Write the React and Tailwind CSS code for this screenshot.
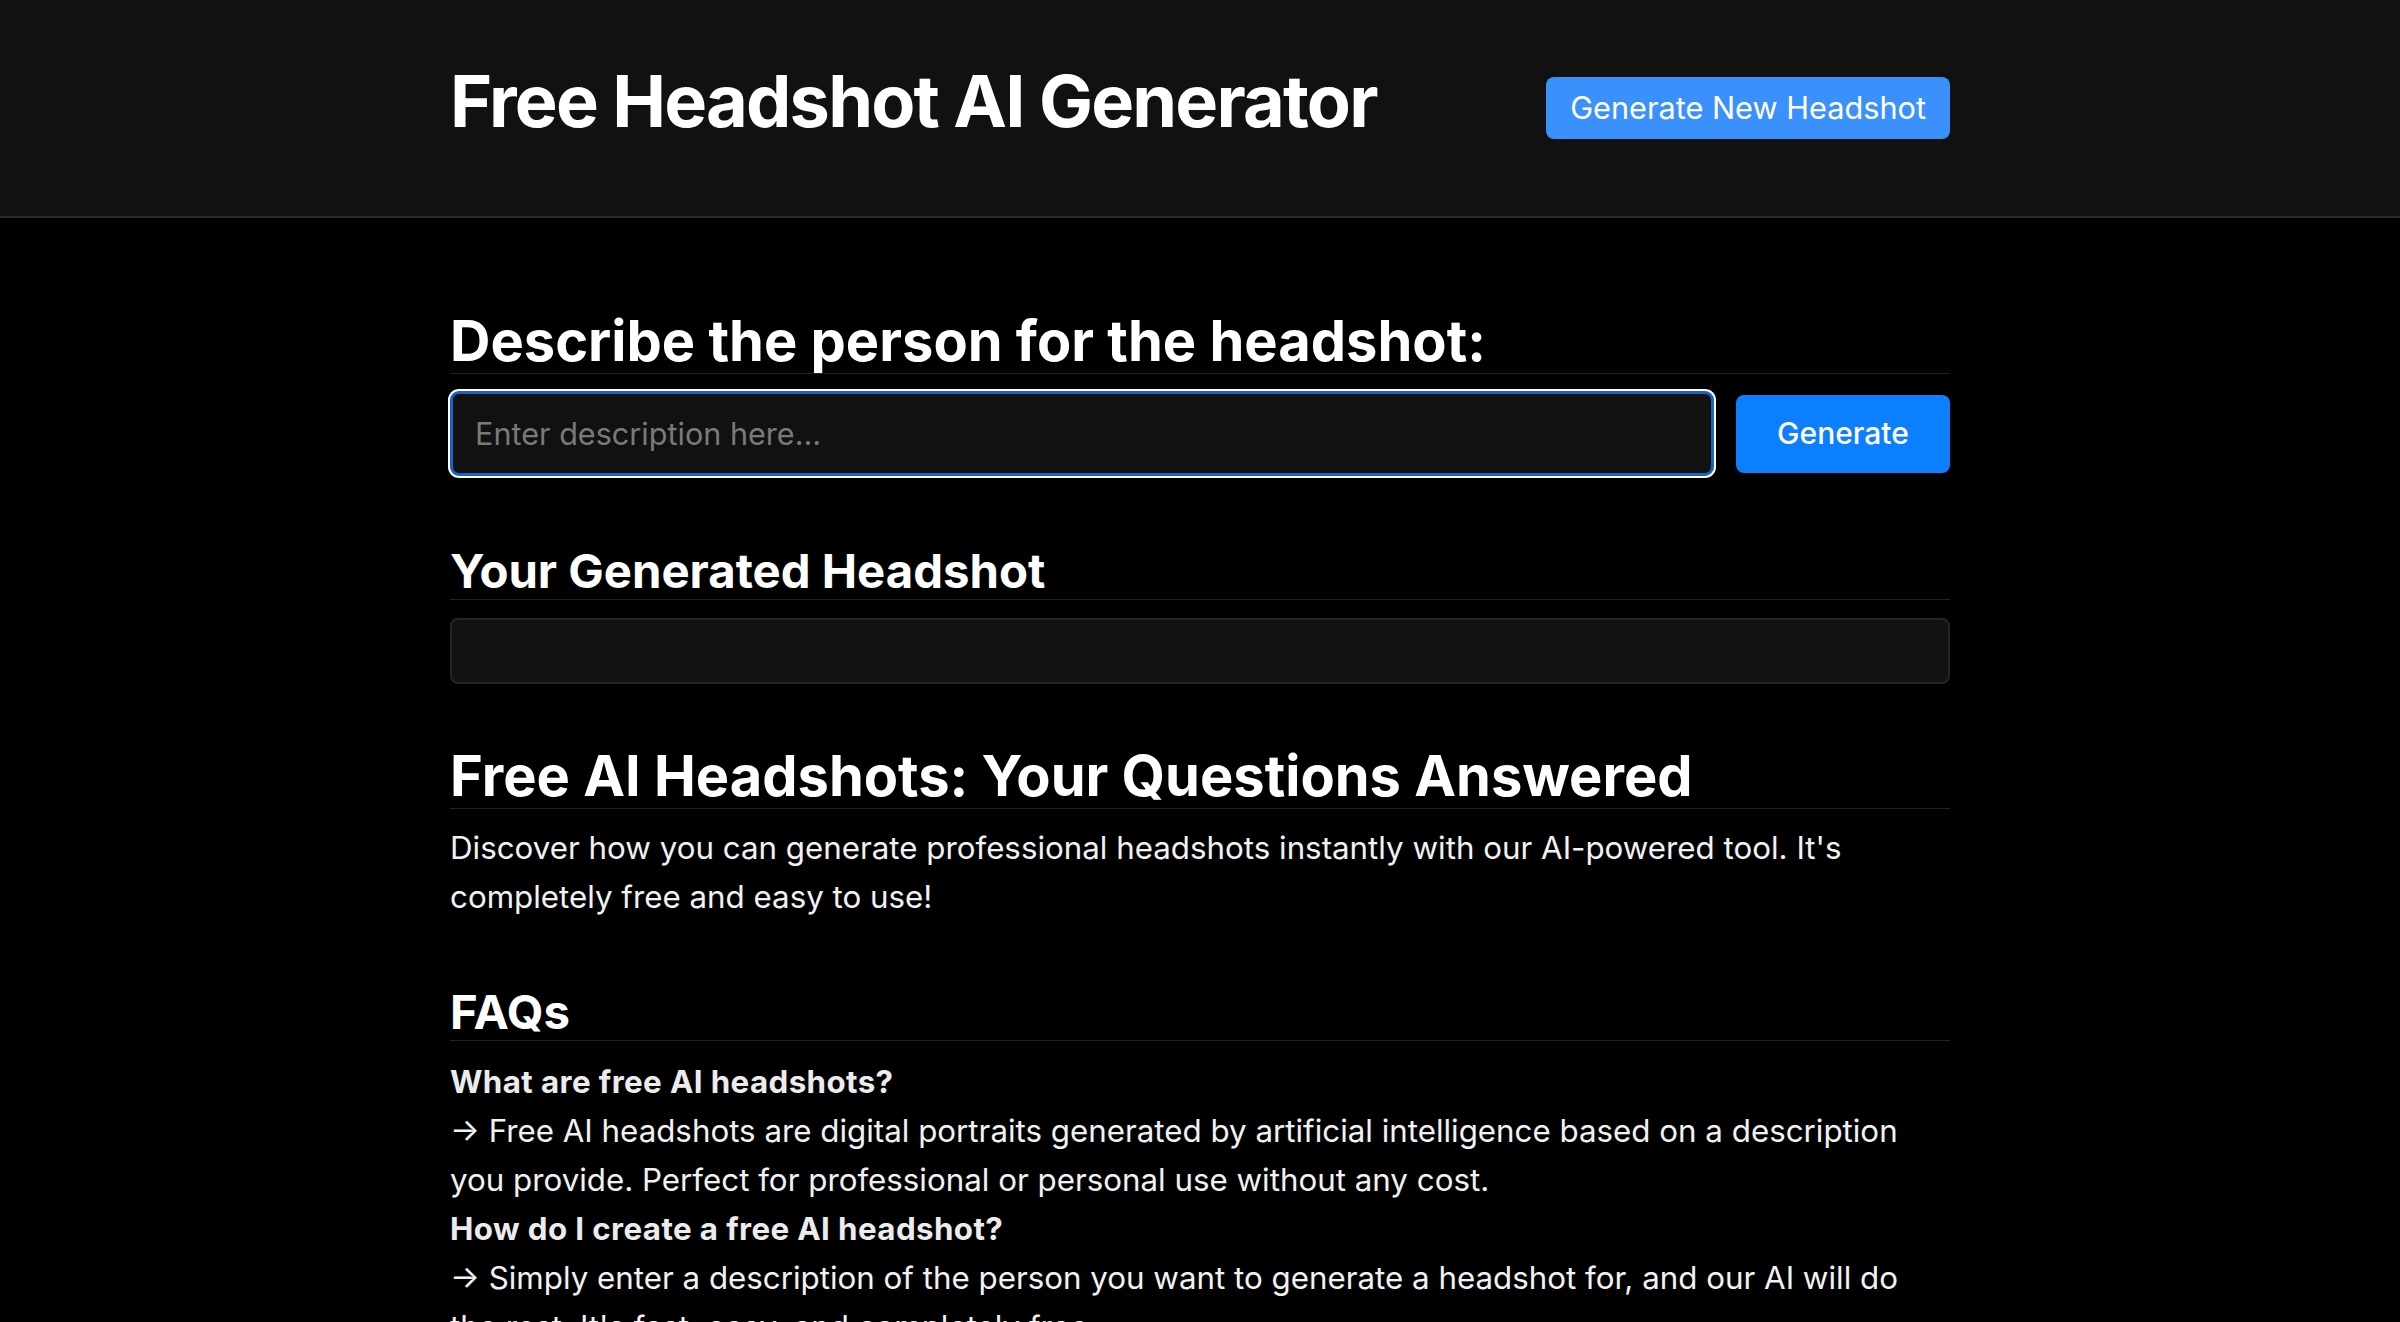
export default function App() {
  return (
    <div className="min-h-screen bg-black text-white font-['Inter','Liberation_Sans',sans-serif]">
      <header className="bg-[#111111] border-b-2 border-[#2a2a2a]">
        <div className="max-w-[1500px] mx-auto h-[216px] flex items-center justify-between">
          <h1 className="text-[72px] font-bold leading-[1.2] mb-[14px] tracking-[-1.8px]">
            Free Headshot AI Generator
          </h1>
          <button className="bg-[#3a91fb] rounded-[8px] h-[62px] px-[24px] text-[30.7px] text-white">
            Generate New Headshot
          </button>
        </div>
      </header>

      <main className="max-w-[1500px] mx-auto">
        <h2 className="mt-[91px] text-[56px] font-bold leading-[1.15] border-b border-[#1f1f1f]">
          Describe the person for the headshot:
        </h2>
        <div className="mt-[17px] flex items-center gap-[22px]">
          <input
            type="text"
            placeholder="Enter description here..."
            className="flex-1 h-[85px] bg-[#111111] border-[3px] border-[#1763c8] rounded-[9px] shadow-[0_0_0_2px_#ffffff] px-[22px] text-[30.6px] text-white placeholder:text-[#7a7a7a] outline-none"
          />
          <button className="w-[214px] h-[78px] bg-[#0b7fff] rounded-[8px] text-[30px] font-medium text-white">
            Generate
          </button>
        </div>

        <h2 className="mt-[68px] text-[47.3px] font-bold leading-[1.15] border-b border-[#1f1f1f]">
          Your Generated Headshot
        </h2>
        <div className="mt-[18px] h-[66px] bg-[#121212] border-2 border-[#262626] rounded-[8px]"></div>

        <h2 className="mt-[60px] text-[56px] font-bold leading-[1.15] border-b border-[#1f1f1f]">
          Free AI Headshots: Your Questions Answered
        </h2>
        <p className="mt-[15px] text-[31.3px] leading-[49px] text-[#f2f2f2]">
          Discover how you can generate professional headshots instantly with our AI-powered tool. It's completely free and easy to use!
        </p>

        <h2 className="mt-[63px] text-[47.3px] font-bold leading-[1.15] border-b border-[#1f1f1f]">
          FAQs
        </h2>
        <div className="mt-[17px] text-[31.3px] leading-[49px] text-[#f2f2f2]">
          <p className="font-bold text-[#ececec] tracking-[0.4px]">What are free AI headshots?</p>
          <p>→ Free AI headshots are digital portraits generated by artificial intelligence based on a description you provide. Perfect for professional or personal use without any cost.</p>
          <p className="font-bold text-[#ececec] tracking-[0.4px]">How do I create a free AI headshot?</p>
          <p>→ Simply enter a description of the person you want to generate a headshot for, and our AI will do the rest. It's fast, easy, and completely free.</p>
          <p className="font-bold text-[#ececec] tracking-[0.4px]">Can I use these headshots for professional purposes?</p>
          <p>→ Yes! The generated headshots are suitable for resumes, social profiles, business websites and more.</p>
        </div>
      </main>
    </div>
  );
}
